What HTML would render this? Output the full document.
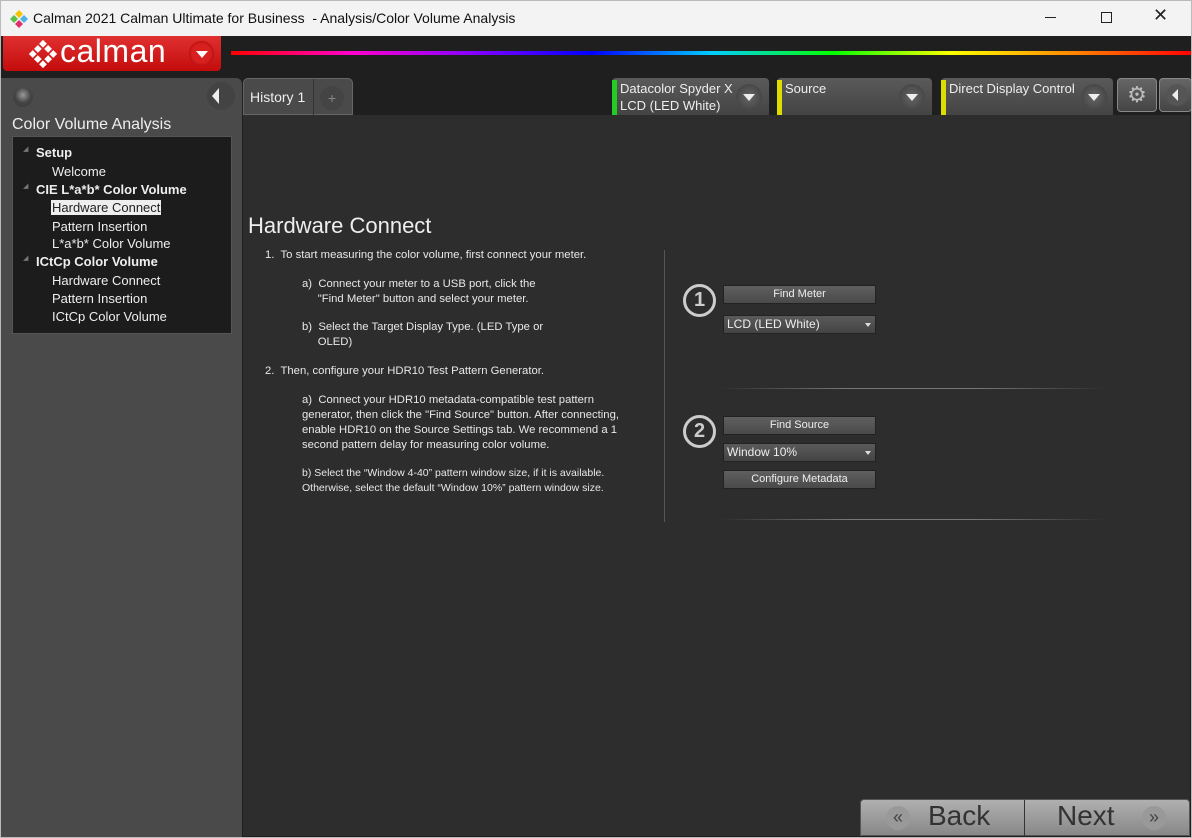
<!DOCTYPE html>
<html><head><style>
*{margin:0;padding:0;box-sizing:border-box}
body{width:1192px;height:838px;background:#f3f3f3;font-family:"Liberation Sans",sans-serif;position:relative;overflow:hidden}
.a{position:absolute}
.t{color:#e8e8e8;font-size:11.3px;line-height:15px}
.btn{position:absolute;left:723px;width:153px;height:19px;background:linear-gradient(#5f5f5f,#4a4a4a);border:1px solid #222;color:#eee;font-size:11px;text-align:center;line-height:17px}
.sel{position:absolute;left:723px;width:153px;height:19px;background:linear-gradient(#5a5a5a,#444);border:1px solid #222;color:#eee;font-size:12px;line-height:17px;padding-left:3px}
.sel:after{content:"";position:absolute;right:4px;top:7px;border:3px solid transparent;border-top:4px solid #ddd}
.circ{position:absolute;left:683px;width:33px;height:33px;border:3px solid #ccc;border-radius:50%;color:#ccc;font-weight:bold;font-size:20px;text-align:center;line-height:27px}
.dd{position:absolute;top:78px;height:37px;background:linear-gradient(#5a5a5a,#444);border-radius:4px 4px 0 0;color:#eee;font-size:13px;line-height:17px;padding:2px 0 0 8px}
.dd i{position:absolute;left:0;top:2px;width:5px;height:35px}
.arr{position:absolute;top:6px;width:26px;height:26px;border-radius:50%;background:radial-gradient(#666,#3a3a3a)}
.arr:after{content:"";position:absolute;left:7px;top:10px;border:6px solid transparent;border-top:7px solid #eee}
.tree div{position:absolute;color:#eee;font-size:13px}
</style></head><body>
<svg class="a" style="left:9px;top:9px" width="20" height="20" viewBox="0 0 20 20"><path d="M10 1l4 4-4 4-4-4z" fill="#f5c400"/><path d="M15 6l4 4-4 4-4-4z" fill="#4ab4e8"/><path d="M10 11l4 4-4 4-4-4z" fill="#e0306a"/><path d="M5 6l4 4-4 4-4-4z" fill="#5bc04a"/></svg>
<div class="a" style="left:33px;top:10px;font-size:14px;color:#111">Calman 2021 Calman Ultimate for Business &nbsp;- Analysis/Color Volume Analysis</div>
<div class="a" style="left:1045px;top:17px;width:11px;height:1px;background:#222"></div>
<div class="a" style="left:1101px;top:12px;width:11px;height:11px;border:1px solid #222"></div>
<div class="a" style="left:1153px;top:5px;font-size:18px;color:#222">✕</div>
<div class="a" style="left:0;top:36px;width:1192px;height:802px;background:#1f1f1f"></div>
<div class="a" style="left:3px;top:36px;width:218px;height:35px;background:linear-gradient(#e03030,#c40c0c);border-radius:0 0 4px 4px"></div>
<svg class="a" style="left:28px;top:39px" width="30" height="30" viewBox="0 0 30 30" fill="#fff"><g transform="rotate(45 15 15)"><rect x="5" y="5" width="5.5" height="5.5"/><rect x="12.2" y="5" width="5.5" height="5.5"/><rect x="19.5" y="5" width="5.5" height="5.5"/><rect x="5" y="12.2" width="5.5" height="5.5"/><rect x="19.5" y="12.2" width="5.5" height="5.5"/><rect x="5" y="19.5" width="5.5" height="5.5"/><rect x="12.2" y="19.5" width="5.5" height="5.5"/><rect x="19.5" y="19.5" width="5.5" height="5.5"/></g></svg>
<div class="a" style="left:60px;top:33px;font-size:32px;color:#fff;letter-spacing:.5px">calman</div>
<div class="a" style="left:189px;top:41px;width:25px;height:25px;border-radius:50%;background:#d82020;box-shadow:0 0 3px #900 inset"></div>
<div class="a" style="left:196px;top:51px;border:6px solid transparent;border-top:7px solid #fff"></div>
<div class="a" style="left:231px;top:51px;width:961px;height:4px;background:linear-gradient(90deg,#f00,#f0c,#80f,#00f,#0cf,#0f0,#ff0,#f80,#f00)"></div>
<div class="a" style="left:0;top:78px;width:242px;height:760px;background:#4a4a4a;border-radius:0 6px 0 0"></div>
<div class="a" style="left:13px;top:87px;width:20px;height:20px;border-radius:50%;background:radial-gradient(circle at 50% 40%,#999,#444 50%,#3a3a3a)"></div>
<div class="a" style="left:207px;top:82px;width:28px;height:28px;border-radius:50%;background:#434343"></div>
<div class="a" style="left:212px;top:88px;border:8px solid transparent;border-right:7px solid #eee;border-left:0"></div>
<div class="a" style="left:12px;top:116px;color:#eee;font-size:16px">Color Volume Analysis</div>
<div class="a" style="left:12px;top:136px;width:220px;height:198px;background:#1c1c1c;border:1px solid #555"></div>
<div class="tree">
<div style="left:23px;top:145px;font-size:7px;color:#777">◢</div>
<div style="left:36px;top:145px;font-weight:bold">Setup</div>
<div style="left:52px;top:164px">Welcome</div>
<div style="left:23px;top:182px;font-size:7px;color:#777">◢</div>
<div style="left:36px;top:182px;font-weight:bold">CIE L*a*b* Color Volume</div>
<div style="left:51px;top:200px;background:#eee;color:#222;padding:0 1px">Hardware Connect</div>
<div style="left:52px;top:219px">Pattern Insertion</div>
<div style="left:52px;top:236px">L*a*b* Color Volume</div>
<div style="left:23px;top:254px;font-size:7px;color:#777">◢</div>
<div style="left:36px;top:254px;font-weight:bold">ICtCp Color Volume</div>
<div style="left:52px;top:273px">Hardware Connect</div>
<div style="left:52px;top:291px">Pattern Insertion</div>
<div style="left:52px;top:309px">ICtCp Color Volume</div>
</div>
<div class="a" style="left:243px;top:78px;width:110px;height:37px;background:#4a4a4a;border-radius:5px 5px 0 0;border:1px solid #666"></div>
<div class="a" style="left:313px;top:79px;width:1px;height:36px;background:#333"></div>
<div class="a" style="left:250px;top:89px;color:#eee;font-size:14px">History 1</div>
<div class="a" style="left:320px;top:86px;width:24px;height:24px;border-radius:50%;background:#444;color:#888;text-align:center;line-height:24px;font-size:14px">+</div>
<div class="dd" style="left:612px;width:157px"><i style="background:#2c2"></i>Datacolor Spyder X<br>LCD (LED White)<div class="arr" style="left:124px"></div></div>
<div class="dd" style="left:777px;width:155px"><i style="background:#dd0"></i>Source<div class="arr" style="left:122px"></div></div>
<div class="dd" style="left:941px;width:172px"><i style="background:#dd0"></i>Direct Display Control<div class="arr" style="left:140px"></div></div>
<div class="a" style="left:1117px;top:78px;width:40px;height:34px;background:linear-gradient(#666,#444);border:1px solid #888;border-radius:4px;color:#bbb;font-size:22px;text-align:center;line-height:32px">⚙</div>
<div class="a" style="left:1159px;top:78px;width:33px;height:34px;background:linear-gradient(#666,#444);border:1px solid #888;border-radius:4px"></div>
<div class="a" style="left:1166px;top:84px;width:22px;height:22px;border-radius:50%;background:#555"></div>
<div class="a" style="left:1172px;top:89px;border:6px solid transparent;border-right:6px solid #eee;border-left:0"></div>
<div class="a" style="left:243px;top:115px;width:947px;height:721px;background:#2d2d2d"></div>
<div class="a" style="left:248px;top:213px;color:#eee;font-size:22px">Hardware Connect</div>
<div class="a t" style="left:265px;top:248px">1.&nbsp; To start measuring the color volume, first connect your meter.</div>
<div class="a t" style="left:302px;top:277px">a)&nbsp; Connect your meter to a USB port, click the<br>&nbsp;&nbsp;&nbsp;&nbsp; "Find Meter" button and select your meter.</div>
<div class="a t" style="left:302px;top:320px">b)&nbsp; Select the Target Display Type. (LED Type or<br>&nbsp;&nbsp;&nbsp;&nbsp; OLED)</div>
<div class="a t" style="left:265px;top:364px">2.&nbsp; Then, configure your HDR10 Test Pattern Generator.</div>
<div class="a t" style="left:302px;top:393px">a)&nbsp; Connect your HDR10 metadata-compatible test pattern<br>generator, then click the "Find Source" button. After connecting,<br>enable HDR10 on the Source Settings tab. We recommend a 1<br>second pattern delay for measuring color volume.</div>
<div class="a t" style="left:302px;top:466px;font-size:10.5px">b) Select the “Window 4-40” pattern window size, if it is available.<br>Otherwise, select the default “Window 10%” pattern window size.</div>
<div class="a" style="left:664px;top:250px;width:1px;height:272px;background:#555"></div>
<div class="circ" style="top:284px">1</div>
<div class="btn" style="top:285px">Find Meter</div>
<div class="sel" style="top:315px">LCD (LED White)</div>
<div class="a" style="left:720px;top:388px;width:385px;height:1px;background:linear-gradient(90deg,transparent,#777,#777,transparent)"></div>
<div class="circ" style="top:415px">2</div>
<div class="btn" style="top:416px">Find Source</div>
<div class="sel" style="top:443px">Window 10%</div>
<div class="btn" style="top:470px">Configure Metadata</div>
<div class="a" style="left:720px;top:519px;width:385px;height:1px;background:linear-gradient(90deg,transparent,#777,#777,transparent)"></div>
<div class="a" style="left:860px;top:799px;width:330px;height:37px;background:linear-gradient(#b0b0b0,#888);border-radius:4px 4px 0 0;border:1px solid #555"></div>
<div class="a" style="left:1024px;top:800px;width:1px;height:36px;background:#333"></div>
<div class="a" style="left:886px;top:806px;width:24px;height:24px;border-radius:50%;background:#999;color:#444;text-align:center;line-height:22px;font-size:18px">«</div>
<div class="a" style="left:928px;top:800px;font-size:28px;color:#333">Back</div>
<div class="a" style="left:1057px;top:800px;font-size:28px;color:#333">Next</div>
<div class="a" style="left:1142px;top:806px;width:24px;height:24px;border-radius:50%;background:#999;color:#444;text-align:center;line-height:22px;font-size:18px">»</div>
<div class="a" style="left:0;top:0;width:1192px;height:838px;border:1px solid #bbb;pointer-events:none"></div>
</body></html>
